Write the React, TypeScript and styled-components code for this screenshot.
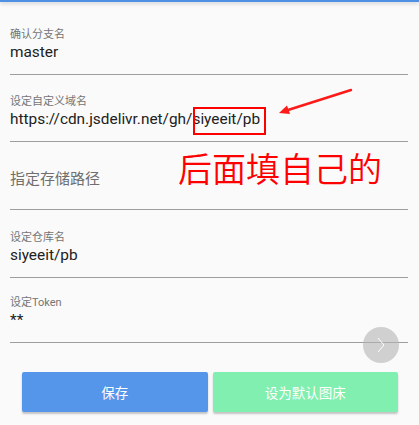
import { styled, createGlobalStyle } from 'styled-components';

const GlobalStyle = createGlobalStyle`
  html, body {
    margin: 0;
    padding: 0;
    background-color: #fafafa;
  }

  body {
    font-family: Roboto, 'Noto Sans CJK SC', sans-serif;
  }
`;

const fields = [
  { label: '确认分支名', value: 'master', height: 73 },
  { label: '设定自定义域名', value: 'https://cdn.jsdelivr.net/gh/siyeeit/pb', height: 67 },
  { label: '指定存储路径', value: '', height: 68 },
  { label: '设定仓库名', value: 'siyeeit/pb', height: 68 },
  { label: '设定Token', value: '**', height: 65 },
];

const App = () => {
  return (
    <Page>
      <GlobalStyle />
      <TopBar />
      <FormLayout>
        {fields.map((field) =>
          field.value ? (
            <Field key={field.label} $height={field.height}>
              <Label>{field.label}</Label>
              <Value>{field.value}</Value>
            </Field>
          ) : (
            <Field key={field.label} $height={field.height} $empty>
              <Hint>{field.label}</Hint>
            </Field>
          ),
        )}

        <Note>后面填自己的</Note>
        <Highlight />
        <Arrow viewBox="270 80 90 40" aria-hidden="true">
          <line x1="351" y1="90" x2="288" y2="110" stroke="#ff1a1a" strokeWidth="2.4" strokeLinecap="round" />
          <polygon points="279,113 290,114 287,105.5" fill="#ff1a1a" />
        </Arrow>

        <NextButton type="button" aria-label="下一步">
          <svg width="10" height="16" viewBox="0 0 10 16">
            <polyline points="2,1 8,8 2,15" fill="none" stroke="#ffffff" strokeWidth="1" />
          </svg>
        </NextButton>
      </FormLayout>

      <ButtonRow>
        <ActionButton type="button" $color="#5596ea">
          保存
        </ActionButton>
        <ActionButton type="button" $color="#80efb0">
          设为默认图床
        </ActionButton>
      </ButtonRow>
    </Page>
  );
};

export default App;

const Page = styled.div`
  width: 419px;
  height: 425px;
  overflow: hidden;
  position: relative;
  background-color: #fafafa;
`;

const TopBar = styled.div`
  height: 2px;
  background-color: #4d90e4;
  box-shadow: 0 1px 4px rgba(0, 0, 0, 0.28);
`;

const FormLayout = styled.div`
  display: flex;
  flex-direction: column;
  padding: 0 11px 0 10px;
`;

const Field = styled.div<{ $height: number; $empty?: boolean }>`
  display: flex;
  flex-direction: column;
  justify-content: flex-end;

  height: ${({ $height }) => $height}px;
  padding-bottom: ${({ $empty }) => ($empty ? 21 : 13)}px;
  box-sizing: border-box;

  border-bottom: 1px solid #9d9d9d;
`;

const Label = styled.span`
  margin-bottom: 2px;

  font-size: 11px;
  line-height: 13px;
  color: #757575;
`;

const Value = styled.span`
  font-size: 15.4px;
  line-height: 18px;
  color: #212121;
  white-space: nowrap;
`;

const Hint = styled.span`
  font-size: 15px;
  line-height: 18px;
  color: #6f6f6f;
`;

const Note = styled.div`
  position: absolute;
  top: 150px;
  left: 178px;

  font-family: 'Noto Sans CJK SC', sans-serif;
  font-size: 34px;
  font-weight: 350;
  line-height: 36px;
  color: #ff0000;
  white-space: nowrap;
`;

const Highlight = styled.div`
  position: absolute;
  top: 107px;
  left: 193px;

  width: 73px;
  height: 28px;
  box-sizing: border-box;

  border: 2px solid #ff0000;
`;

const Arrow = styled.svg`
  position: absolute;
  top: 80px;
  left: 270px;

  width: 90px;
  height: 40px;
`;

const NextButton = styled.button`
  position: absolute;
  top: 327px;
  left: 363px;

  display: flex;
  align-items: center;
  justify-content: center;

  width: 36px;
  height: 36px;
  padding: 0;

  background-color: rgba(180, 180, 180, 0.6);
  border: none;
  border-radius: 50%;
`;

const ButtonRow = styled.div`
  display: flex;
  gap: 5px;

  margin-top: 29px;
  padding: 0 21px 0 22px;
`;

const ActionButton = styled.button<{ $color: string }>`
  flex: 1;
  height: 40px;

  font-family: Roboto, 'Noto Sans CJK SC', sans-serif;
  font-size: 13.5px;
  font-weight: 400;
  color: #ffffff;

  background-color: ${({ $color }) => $color};
  border: none;
  border-radius: 2px;
  box-shadow: 0 2px 2px rgba(0, 0, 0, 0.22);
`;
